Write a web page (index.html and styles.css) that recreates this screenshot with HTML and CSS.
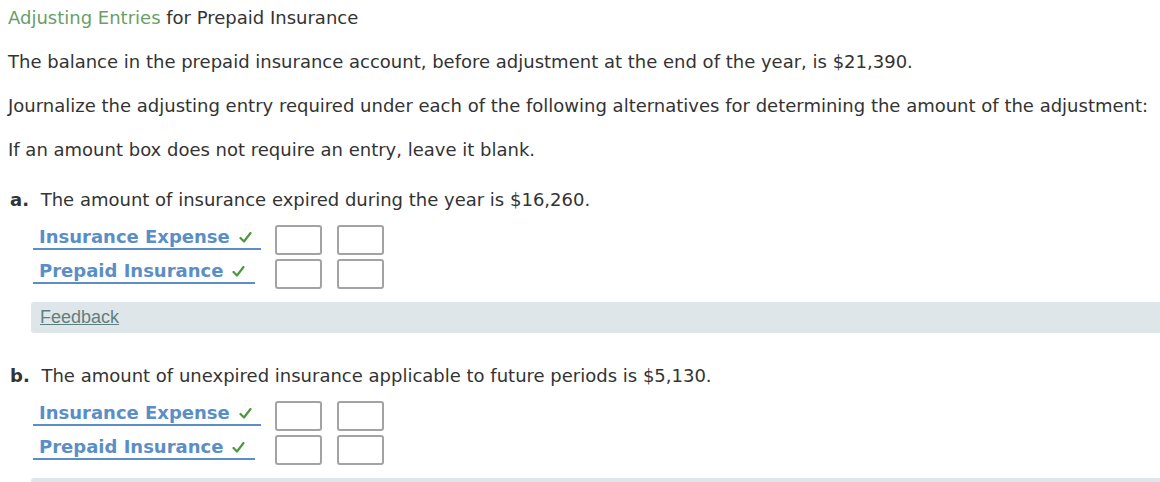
FILE: index.html
```html
<!DOCTYPE html>
<html lang="en">

<head>
    <meta charset="UTF-8">
    <title>Adjusting Entries for Prepaid Insurance</title>
    <link rel="stylesheet" href="styles.css">
</head>

<body>
    <div class="page">
        <div class="title"><span class="title-link">Adjusting Entries</span> for Prepaid Insurance</div>

        <p class="para">The balance in the prepaid insurance account, before adjustment at the end of the year, is $21,390.</p>
        <p class="para">Journalize the adjusting entry required under each of the following alternatives for determining the amount of the adjustment:</p>
        <p class="para">If an amount box does not require an entry, leave it blank.</p>

        <!-- Part a -->
        <div class="part">
            <div class="part-q"><b>a.</b> The amount of insurance expired during the year is $16,260.</div>
            <div class="entry">
                <div class="entry-row">
                    <div class="account wide">Insurance Expense
                        <svg class="check" width="13" height="13" viewBox="0 0 13 13"><path d="M1.5 7 L5 10.5 L11.5 2" /></svg>
                    </div>
                    <div class="amount"></div>
                    <div class="amount"></div>
                </div>
                <div class="entry-row">
                    <div class="account">Prepaid Insurance
                        <svg class="check" width="13" height="13" viewBox="0 0 13 13"><path d="M1.5 7 L5 10.5 L11.5 2" /></svg>
                    </div>
                    <div class="amount"></div>
                    <div class="amount"></div>
                </div>
            </div>
            <div class="feedback"><a href="#">Feedback</a></div>
        </div>

        <!-- Part b -->
        <div class="part">
            <div class="part-q"><b>b.</b> The amount of unexpired insurance applicable to future periods is $5,130.</div>
            <div class="entry">
                <div class="entry-row">
                    <div class="account wide">Insurance Expense
                        <svg class="check" width="13" height="13" viewBox="0 0 13 13"><path d="M1.5 7 L5 10.5 L11.5 2" /></svg>
                    </div>
                    <div class="amount"></div>
                    <div class="amount"></div>
                </div>
                <div class="entry-row">
                    <div class="account">Prepaid Insurance
                        <svg class="check" width="13" height="13" viewBox="0 0 13 13"><path d="M1.5 7 L5 10.5 L11.5 2" /></svg>
                    </div>
                    <div class="amount"></div>
                    <div class="amount"></div>
                </div>
            </div>
            <div class="feedback"><a href="#">Feedback</a></div>
        </div>
    </div>
</body>

</html>
```

FILE: styles.css
```css
* {
    margin: 0;
    padding: 0;
    box-sizing: border-box;
}

body {
    background-color: white;
    font-family: "DejaVu Sans", Verdana, sans-serif;
    font-size: 18px;
    color: #333;
    overflow: hidden;
}

.page {
    padding: 7px 0 0 8px;
}

.title {
    line-height: 22px;
    margin-bottom: 22px;
}

.title-link {
    color: #68a068;
}

.para {
    line-height: 22px;
    margin-bottom: 22px;
}

.part {
    margin-left: 2px;
    margin-top: 28px;
}

.part-q {
    line-height: 22px;
    margin-bottom: 14px;
}

.part-q b {
    margin-right: 6px;
}

.entry {
    padding-left: 23px;
    display: flex;
    flex-direction: column;
    gap: 4px;
}

.entry-row {
    display: flex;
    align-items: flex-start;
    height: 30px;
}

.account {
    width: 228px;
    padding-left: 6px;
    font-weight: bold;
    color: #5b8ec6;
    border-bottom: 2px solid #5b8ec6;
    line-height: 22px;
    margin-top: 1px;
    margin-right: 14px;
    white-space: nowrap;
    display: flex;
    align-items: center;
}

.account + .amount {
    margin-left: 0;
}

.entry-row:nth-child(2) .account {
    width: 222px;
    margin-right: 20px;
}

.check {
    margin-left: 9px;
    fill: none;
    stroke: #4a9a3e;
    stroke-width: 2.2;
    stroke-linecap: round;
    stroke-linejoin: round;
}

.amount {
    width: 47px;
    height: 30px;
    border: 2px solid #a3a3a3;
    border-radius: 3px;
    margin-right: 15px;
}

.feedback {
    margin-top: 13px;
    margin-left: 21px;
    margin-right: -10px;
    background-color: #dfe6e9;
    border-radius: 3px;
    height: 31px;
    padding-left: 9px;
    display: flex;
    align-items: center;
    margin-bottom: 32px;
}

.feedback a {
    font-family: "Liberation Sans", Arial, sans-serif;
    font-size: 18px;
    color: #5f7f80;
    text-decoration: underline;
}
```
